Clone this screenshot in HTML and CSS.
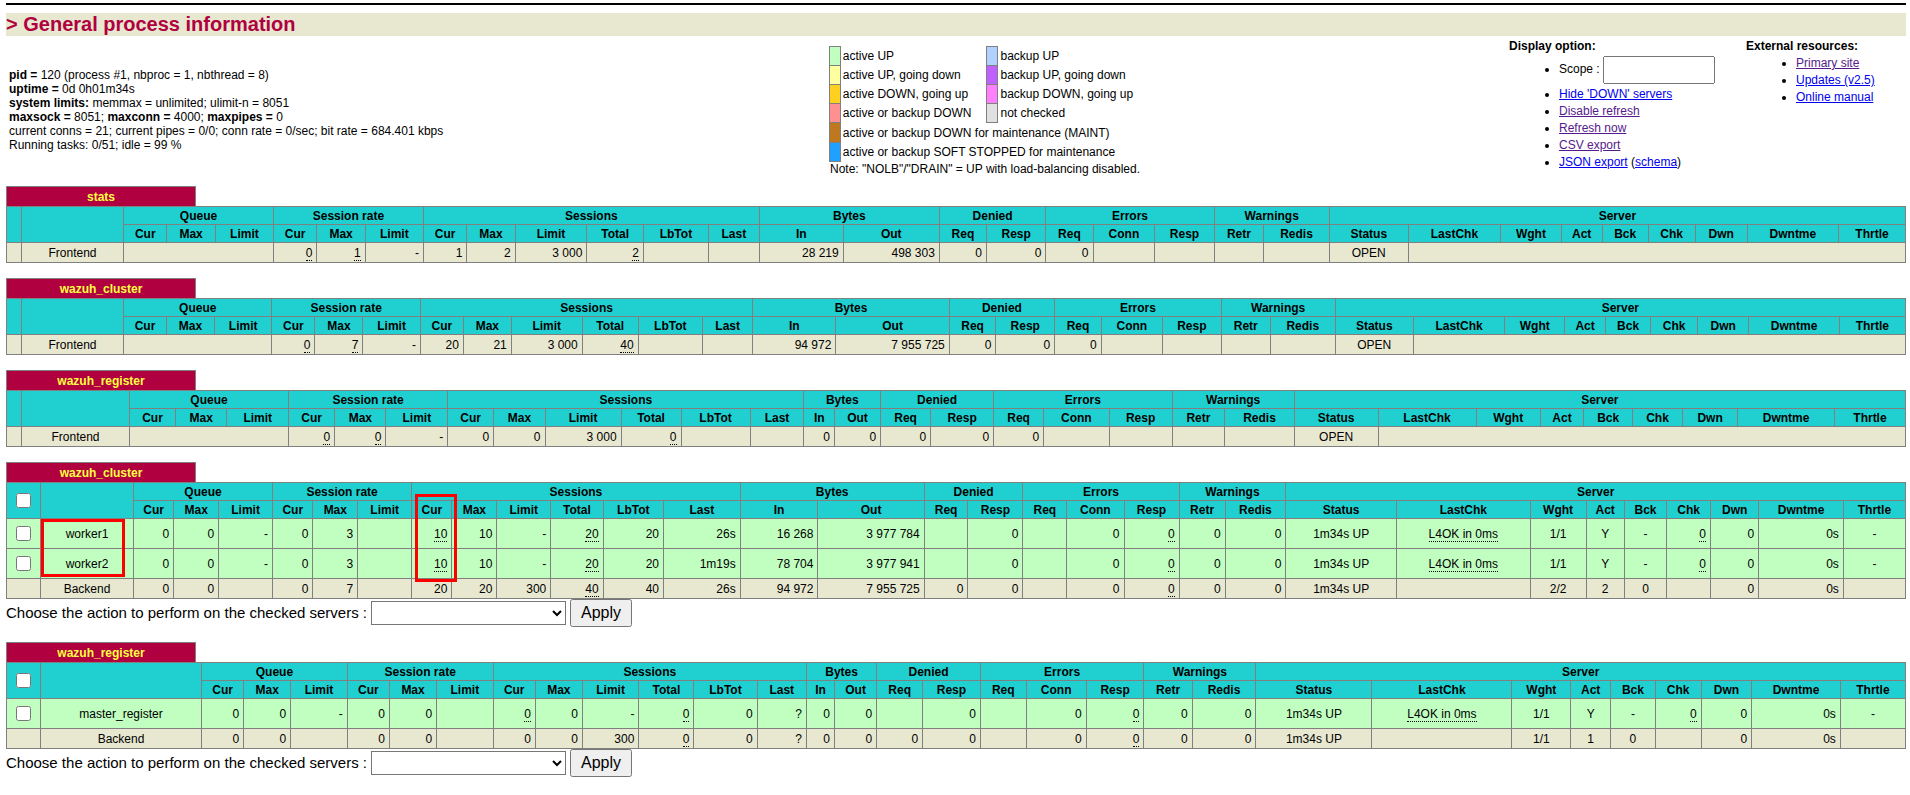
FILE: index.html
```html
<!DOCTYPE html>
<html lang="en">
<head>
  <meta charset="UTF-8">
  <meta name="viewport" content="width=device-width, initial-scale=1.0">
  <title>Statistics Report for HAProxy</title>
  <link rel="stylesheet" href="styles.css">
</head>
<body>
  <div class="hr"></div>
  <h3>&gt; General process information</h3>

  <div class="info">
    <div class="process">
      <b>pid = </b> 120 (process #1, nbproc = 1, nbthread = 8)<br>
      <b>uptime = </b> 0d 0h01m34s<br>
      <b>system limits:</b> memmax = unlimited; ulimit-n = 8051<br>
      <b>maxsock = </b> 8051; <b>maxconn = </b> 4000; <b>maxpipes = </b> 0<br>
      current conns = 21; current pipes = 0/0; conn rate = 0/sec; bit rate = 684.401 kbps<br>
      Running tasks: 0/51; idle = 99 %
    </div>
    <div class="legend">
      <table class="lgd">
        <tr>
          <td class="active_up"></td><td class="noborder">active UP</td>
          <td class="backup_up"></td><td class="noborder">backup UP</td>
        </tr>
        <tr>
          <td class="active_going_down"></td><td class="noborder">active UP, going down</td>
          <td class="backup_going_down"></td><td class="noborder">backup UP, going down</td>
        </tr>
        <tr>
          <td class="active_going_up"></td><td class="noborder">active DOWN, going up</td>
          <td class="backup_going_up"></td><td class="noborder">backup DOWN, going up</td>
        </tr>
        <tr>
          <td class="active_down"></td><td class="noborder">active or backup DOWN</td>
          <td class="no_check"></td><td class="noborder">not checked</td>
        </tr>
        <tr>
          <td class="maintain"></td><td class="noborder" colspan="3">active or backup DOWN for maintenance (MAINT)</td>
        </tr>
        <tr>
          <td class="soft_stopped"></td><td class="noborder" colspan="3">active or backup SOFT STOPPED for maintenance</td>
        </tr>
      </table>
      Note: "NOLB"/"DRAIN" = UP with load-balancing disabled.
    </div>
    <div class="options">
      <b>Display option:</b>
      <ul>
        <li><label for="scope">Scope :</label> <input type="text" id="scope" name="scope"></li>
        <li><a href="#">Hide 'DOWN' servers</a></li>
        <li><a class="visited" href="#">Disable refresh</a></li>
        <li><a class="visited" href="#">Refresh now</a></li>
        <li><a class="visited" href="#">CSV export</a></li>
        <li><a href="#">JSON export</a> (<a href="#">schema</a>)</li>
      </ul>
    </div>
    <div class="resources">
      <b>External resources:</b>
      <ul>
        <li><a class="visited" href="#">Primary site</a></li>
        <li><a href="#">Updates (v2.5)</a></li>
        <li><a href="#">Online manual</a></li>
      </ul>
    </div>
  </div>

  <div class="proxy">
    <div class="pxname"><a class="px" href="#">stats</a></div>
    <table class="tbl">
      <colgroup><col class="empty"><col class="name"></colgroup>
      <tr class="titre"><th rowspan="2"></th><th rowspan="2"></th><th colspan="3">Queue</th><th colspan="3">Session rate</th><th colspan="6">Sessions</th><th colspan="2">Bytes</th><th colspan="2">Denied</th><th colspan="3">Errors</th><th colspan="2">Warnings</th><th colspan="9">Server</th></tr>
      <tr class="titre"><th>Cur</th><th>Max</th><th>Limit</th><th>Cur</th><th>Max</th><th>Limit</th><th>Cur</th><th>Max</th><th>Limit</th><th>Total</th><th>LbTot</th><th>Last</th><th>In</th><th>Out</th><th>Req</th><th>Resp</th><th>Req</th><th>Conn</th><th>Resp</th><th>Retr</th><th>Redis</th><th>Status</th><th>LastChk</th><th>Wght</th><th>Act</th><th>Bck</th><th>Chk</th><th>Dwn</th><th>Dwntme</th><th>Thrtle</th></tr>
      <tr class="frontend"><td></td><td class="ac">Frontend</td><td colspan="3"></td><td><u>0</u></td><td><u>1</u></td><td>-</td><td>1</td><td>2</td><td>3 000</td><td><u>2</u></td><td></td><td></td><td>28 219</td><td>498 303</td><td>0</td><td>0</td><td>0</td><td></td><td></td><td></td><td></td><td class="ac">OPEN</td><td colspan="8"></td></tr>
    </table>
  </div>

  <div class="proxy">
    <div class="pxname"><a class="px" href="#">wazuh_cluster</a></div>
    <table class="tbl">
      <colgroup><col class="empty"><col class="name"></colgroup>
      <tr class="titre"><th rowspan="2"></th><th rowspan="2"></th><th colspan="3">Queue</th><th colspan="3">Session rate</th><th colspan="6">Sessions</th><th colspan="2">Bytes</th><th colspan="2">Denied</th><th colspan="3">Errors</th><th colspan="2">Warnings</th><th colspan="9">Server</th></tr>
      <tr class="titre"><th>Cur</th><th>Max</th><th>Limit</th><th>Cur</th><th>Max</th><th>Limit</th><th>Cur</th><th>Max</th><th>Limit</th><th>Total</th><th>LbTot</th><th>Last</th><th>In</th><th>Out</th><th>Req</th><th>Resp</th><th>Req</th><th>Conn</th><th>Resp</th><th>Retr</th><th>Redis</th><th>Status</th><th>LastChk</th><th>Wght</th><th>Act</th><th>Bck</th><th>Chk</th><th>Dwn</th><th>Dwntme</th><th>Thrtle</th></tr>
      <tr class="frontend"><td></td><td class="ac">Frontend</td><td colspan="3"></td><td><u>0</u></td><td><u>7</u></td><td>-</td><td>20</td><td>21</td><td>3 000</td><td><u>40</u></td><td></td><td></td><td>94 972</td><td>7 955 725</td><td>0</td><td>0</td><td>0</td><td></td><td></td><td></td><td></td><td class="ac">OPEN</td><td colspan="8"></td></tr>
    </table>
  </div>

  <div class="proxy">
    <div class="pxname"><a class="px" href="#">wazuh_register</a></div>
    <table class="tbl">
      <colgroup><col class="empty"><col class="name-idle"></colgroup>
      <tr class="titre"><th rowspan="2"></th><th rowspan="2"></th><th colspan="3">Queue</th><th colspan="3">Session rate</th><th colspan="6">Sessions</th><th colspan="2">Bytes</th><th colspan="2">Denied</th><th colspan="3">Errors</th><th colspan="2">Warnings</th><th colspan="9">Server</th></tr>
      <tr class="titre"><th>Cur</th><th>Max</th><th>Limit</th><th>Cur</th><th>Max</th><th>Limit</th><th>Cur</th><th>Max</th><th>Limit</th><th>Total</th><th>LbTot</th><th>Last</th><th>In</th><th>Out</th><th>Req</th><th>Resp</th><th>Req</th><th>Conn</th><th>Resp</th><th>Retr</th><th>Redis</th><th>Status</th><th>LastChk</th><th>Wght</th><th>Act</th><th>Bck</th><th>Chk</th><th>Dwn</th><th>Dwntme</th><th>Thrtle</th></tr>
      <tr class="frontend"><td></td><td class="ac">Frontend</td><td colspan="3"></td><td><u>0</u></td><td><u>0</u></td><td>-</td><td>0</td><td>0</td><td>3 000</td><td><u>0</u></td><td></td><td></td><td>0</td><td>0</td><td>0</td><td>0</td><td>0</td><td></td><td></td><td></td><td></td><td class="ac">OPEN</td><td colspan="8"></td></tr>
    </table>
  </div>

  <form class="proxy">
    <div class="pxname"><a class="px" href="#">wazuh_cluster</a></div>
    <table class="tbl">
      <colgroup><col class="check"><col class="name-worker"></colgroup>
      <tr class="titre"><th rowspan="2"><input type="checkbox" aria-label="All servers of wazuh_cluster"></th><th rowspan="2"></th><th colspan="3">Queue</th><th colspan="3">Session rate</th><th colspan="6">Sessions</th><th colspan="2">Bytes</th><th colspan="2">Denied</th><th colspan="3">Errors</th><th colspan="2">Warnings</th><th colspan="9">Server</th></tr>
      <tr class="titre"><th>Cur</th><th>Max</th><th>Limit</th><th>Cur</th><th>Max</th><th>Limit</th><th class="marked">Cur<span class="mark mark-cur"></span></th><th>Max</th><th>Limit</th><th>Total</th><th>LbTot</th><th>Last</th><th>In</th><th>Out</th><th>Req</th><th>Resp</th><th>Req</th><th>Conn</th><th>Resp</th><th>Retr</th><th>Redis</th><th>Status</th><th>LastChk</th><th>Wght</th><th>Act</th><th>Bck</th><th>Chk</th><th>Dwn</th><th>Dwntme</th><th>Thrtle</th></tr>
      <tr class="active_up"><td class="ac"><input type="checkbox" aria-label="worker1"></td><td class="ac marked">worker1<span class="mark mark-names"></span></td><td>0</td><td>0</td><td>-</td><td>0</td><td>3</td><td></td><td><u>10</u></td><td>10</td><td>-</td><td><u>20</u></td><td>20</td><td>26s</td><td>16 268</td><td>3 977 784</td><td></td><td>0</td><td></td><td>0</td><td><u>0</u></td><td>0</td><td>0</td><td class="ac">1m34s UP</td><td class="ac"><u>L4OK in 0ms</u></td><td class="ac">1/1</td><td class="ac">Y</td><td class="ac">-</td><td><u>0</u></td><td>0</td><td>0s</td><td class="ac">-</td></tr>
      <tr class="active_up"><td class="ac"><input type="checkbox" aria-label="worker2"></td><td class="ac">worker2</td><td>0</td><td>0</td><td>-</td><td>0</td><td>3</td><td></td><td><u>10</u></td><td>10</td><td>-</td><td><u>20</u></td><td>20</td><td>1m19s</td><td>78 704</td><td>3 977 941</td><td></td><td>0</td><td></td><td>0</td><td><u>0</u></td><td>0</td><td>0</td><td class="ac">1m34s UP</td><td class="ac"><u>L4OK in 0ms</u></td><td class="ac">1/1</td><td class="ac">Y</td><td class="ac">-</td><td><u>0</u></td><td>0</td><td>0s</td><td class="ac">-</td></tr>
      <tr class="backend"><td></td><td class="ac">Backend</td><td>0</td><td>0</td><td></td><td>0</td><td>7</td><td></td><td>20</td><td>20</td><td>300</td><td><u>40</u></td><td>40</td><td>26s</td><td>94 972</td><td>7 955 725</td><td>0</td><td>0</td><td></td><td>0</td><td><u>0</u></td><td>0</td><td>0</td><td class="ac">1m34s UP</td><td></td><td class="ac">2/2</td><td class="ac">2</td><td class="ac">0</td><td></td><td>0</td><td>0s</td><td></td></tr>
    </table>
    <div class="action">
      <label for="action-cluster">Choose the action to perform on the checked servers :</label>
      <select id="action-cluster" name="action"><option value=""></option></select>
      <button type="button">Apply</button>
    </div>
  </form>

  <form class="proxy">
    <div class="pxname"><a class="px" href="#">wazuh_register</a></div>
    <table class="tbl">
      <colgroup><col class="check"><col class="name-master"></colgroup>
      <tr class="titre"><th rowspan="2"><input type="checkbox" aria-label="All servers of wazuh_register"></th><th rowspan="2"></th><th colspan="3">Queue</th><th colspan="3">Session rate</th><th colspan="6">Sessions</th><th colspan="2">Bytes</th><th colspan="2">Denied</th><th colspan="3">Errors</th><th colspan="2">Warnings</th><th colspan="9">Server</th></tr>
      <tr class="titre"><th>Cur</th><th>Max</th><th>Limit</th><th>Cur</th><th>Max</th><th>Limit</th><th>Cur</th><th>Max</th><th>Limit</th><th>Total</th><th>LbTot</th><th>Last</th><th>In</th><th>Out</th><th>Req</th><th>Resp</th><th>Req</th><th>Conn</th><th>Resp</th><th>Retr</th><th>Redis</th><th>Status</th><th>LastChk</th><th>Wght</th><th>Act</th><th>Bck</th><th>Chk</th><th>Dwn</th><th>Dwntme</th><th>Thrtle</th></tr>
      <tr class="active_up"><td class="ac"><input type="checkbox" aria-label="master_register"></td><td class="ac">master_register</td><td>0</td><td>0</td><td>-</td><td>0</td><td>0</td><td></td><td><u>0</u></td><td>0</td><td>-</td><td><u>0</u></td><td>0</td><td>?</td><td>0</td><td>0</td><td></td><td>0</td><td></td><td>0</td><td><u>0</u></td><td>0</td><td>0</td><td class="ac">1m34s UP</td><td class="ac"><u>L4OK in 0ms</u></td><td class="ac">1/1</td><td class="ac">Y</td><td class="ac">-</td><td><u>0</u></td><td>0</td><td>0s</td><td class="ac">-</td></tr>
      <tr class="backend"><td></td><td class="ac">Backend</td><td>0</td><td>0</td><td></td><td>0</td><td>0</td><td></td><td>0</td><td>0</td><td>300</td><td><u>0</u></td><td>0</td><td>?</td><td>0</td><td>0</td><td>0</td><td>0</td><td></td><td>0</td><td><u>0</u></td><td>0</td><td>0</td><td class="ac">1m34s UP</td><td></td><td class="ac">1/1</td><td class="ac">1</td><td class="ac">0</td><td></td><td>0</td><td>0s</td><td></td></tr>
    </table>
    <div class="action">
      <label for="action-register">Choose the action to perform on the checked servers :</label>
      <select id="action-register" name="action"><option value=""></option></select>
      <button type="button">Apply</button>
    </div>
  </form>
</body>
</html>
```
FILE: styles.css
```css
body {
  font-family: "Liberation Sans", Arial, Helvetica, sans-serif;
  font-size: 12px;
  line-height: 14px;
  margin: 3px 4px 0 6px;
  color: black;
  background: white;
}
.hr {
  border-bottom: 2px solid black;
  margin-right: -4px;
  margin-bottom: 8px;
}
h3 {
  font-size: 20px;
  line-height: 23px;
  font-weight: bold;
  color: #b00040;
  background: #e8e8d0;
  margin: 0;
}
a {
  color: #0000ee;
}
a.visited {
  color: #551a8b;
}
u {
  text-decoration: none;
  border-bottom: 1px dotted black;
}

/* process information */
.info {
  display: flex;
  align-items: flex-start;
  min-height: 150px;
}
.process {
  padding: 32px 0 0 3px;
  width: 452px;
  white-space: nowrap;
}
.legend {
  flex: 1;
  display: flex;
  flex-direction: column;
  align-items: center;
  padding-top: 10px;
}
.options {
  width: 237px;
  padding-top: 3px;
}
.resources {
  width: 160px;
  padding-top: 3px;
  white-space: nowrap;
}
.info ul {
  margin: 0;
  padding-left: 50px;
}
.info li {
  margin-top: 3px;
}
.options input {
  box-sizing: border-box;
  width: 112px;
  height: 28px;
  vertical-align: middle;
}

table.lgd {
  border-collapse: collapse;
}
table.lgd td {
  border: 1px solid gray;
  padding: 2px 5px;
}
table.lgd td.noborder {
  border-style: none;
  padding: 2px;
  height: 15px;
  white-space: nowrap;
}
table.lgd td.noborder:nth-child(2) {
  padding-right: 15px;
}
table.lgd td.noborder:nth-child(4) {
  padding-right: 8px;
}

/* row and legend colours */
.titre {
  background: #20d0d0;
  color: black;
  font-weight: bold;
  text-align: center;
}
.frontend, .backend {
  background: #e8e8d0;
}
.active_up {
  background: #c0ffc0;
}
.active_going_down {
  background: #ffffa0;
}
.active_going_up {
  background: #ffd020;
}
.active_down {
  background: #ff9090;
}
.backup_up {
  background: #b0d0ff;
}
.backup_going_down {
  background: #c060ff;
}
.backup_going_up {
  background: #ff80ff;
}
.no_check {
  background: #e0e0e0;
}
.maintain {
  background: #c07820;
}
.soft_stopped {
  background: #20a0ff;
}

/* proxies */
.proxy {
  margin: 0 0 15px;
}
.pxname {
  box-sizing: border-box;
  width: 10%;
  height: 20px;
  padding: 3px;
  border: 1px solid gray;
  border-bottom: none;
  background: #b00040;
  font-weight: bold;
  text-align: center;
}
a.px {
  color: #ffff40;
  text-decoration: none;
}
table.tbl {
  width: 100%;
  border-collapse: collapse;
}
table.tbl th {
  border: 1px solid gray;
  padding: 1px;
  height: 15px;
}
table.tbl td {
  border: 1px solid gray;
  padding: 2px 4px;
  height: 15px;
  text-align: right;
  white-space: nowrap;
}
table.tbl td.ac {
  text-align: center;
}
table.tbl input {
  display: block;
  width: 15px;
  height: 15px;
  margin: 5px auto;
}
table.tbl th input {
  margin: 0 auto;
}

/* the two leading columns, the others share what is left */
col.empty {
  width: 15px;
}
col.check {
  width: 34px;
}
col.name {
  width: 102px;
}
col.name-idle {
  width: 108px;
}
col.name-worker {
  width: 93px;
}
col.name-master {
  width: 161px;
}

.action {
  display: flex;
  align-items: center;
  gap: 4px;
  font-size: 15px;
}
.action select {
  width: 195px;
  height: 24px;
  background: white;
}
.action button {
  width: 62px;
  height: 28px;
  padding: 0;
  font-family: inherit;
  font-size: 16px;
}

/* red frames drawn over the cluster table */
.marked {
  position: relative;
}
.mark {
  position: absolute;
  box-sizing: border-box;
  border: 3px solid red;
}
.mark-names {
  top: 0;
  left: 0;
  width: 84px;
  height: 58px;
}
.mark-cur {
  top: -7px;
  left: 3px;
  width: 42px;
  height: 88px;
}
```
